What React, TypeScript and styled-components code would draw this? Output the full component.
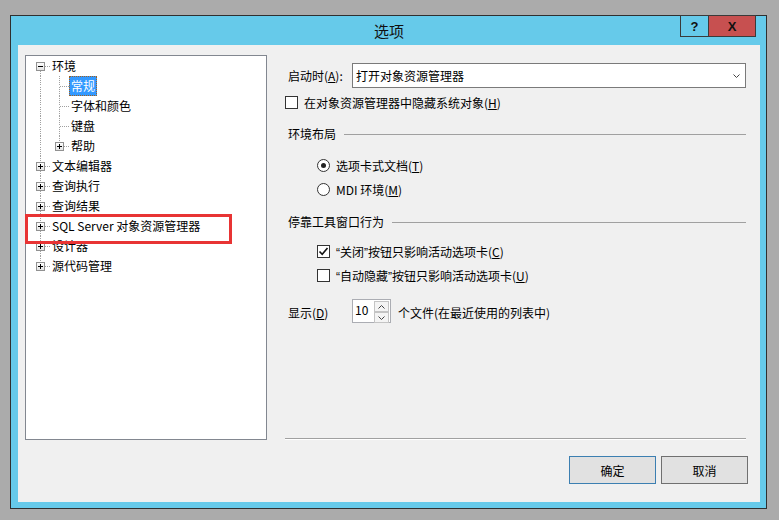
import * as React from 'react';
import styled, { createGlobalStyle } from 'styled-components';

const GlobalStyle = createGlobalStyle`
  body {
    margin: 0;
    padding: 15px 0 0 10px;
    background: #ababab;
    font-family: "Noto Sans CJK SC", "Noto Sans", sans-serif;
    font-size: 12px;
    color: #000;
  }
`;

const Window = styled.div`
  box-sizing: border-box;
  width: 757px;
  height: 494px;
  border: 1px solid #2f2f2f;
  background: #66caea;
  padding: 0 6px 6px 7px;
  display: flex;
  flex-direction: column;
`;

const TitleBar = styled.div`
  height: 29px;
  flex: none;
  display: grid;
  grid-template-columns: 1fr auto 1fr;
  align-items: center;
`;

const Title = styled.div`
  grid-column: 2;
  font-size: 15px;
  line-height: 29px;
  color: #111;
`;

const CaptionButtons = styled.div`
  grid-column: 3;
  justify-self: end;
  align-self: start;
  display: flex;
  margin-top: -1px;
  margin-right: 4px;
`;

interface CaptionButtonProps {
  $close?: boolean;
}

const CaptionButton = styled.div<CaptionButtonProps>`
  box-sizing: border-box;
  width: ${({ $close }) => ($close ? '48px' : '29px')};
  height: 22px;
  border: 1px solid #3a3a3a;
  margin-left: ${({ $close }) => ($close ? '-1px' : '0')};
  background: ${({ $close }) => ($close ? '#c75050' : '#66caea')};
  display: flex;
  align-items: center;
  justify-content: center;
  font-family: "Liberation Sans", sans-serif;
  font-weight: bold;
  font-size: 13px;
  color: #111;
`;

const Content = styled.div`
  flex: 1;
  background: #f0f0f0;
  padding: 10px 12px 18px 7px;
  display: flex;
  flex-direction: column;
`;

const Main = styled.div`
  height: 385px;
  display: grid;
  grid-template-columns: 242px 1fr;
  column-gap: 18px;
`;

const TreePanel = styled.div`
  position: relative;
  box-sizing: border-box;
  border: 1px solid #828790;
  background: #fff;
  padding-left: 5px;
`;

const TreeRow = styled.div`
  height: 20px;
  display: flex;
  align-items: center;
`;

interface NodeLabelProps {
  $selected?: boolean;
}

const NodeLabel = styled.span<NodeLabelProps>`
  box-sizing: border-box;
  height: 20px;
  line-height: 18px;
  padding: 0 1px;
  border: 1px dotted ${({ $selected }) => ($selected ? '#a0601f' : 'transparent')};
  background: ${({ $selected }) => ($selected ? '#3399ff' : 'transparent')};
  color: ${({ $selected }) => ($selected ? '#fff' : '#000')};
  white-space: nowrap;
`;

const Highlight = styled.div`
  position: absolute;
  left: -1px;
  top: 158px;
  width: 207px;
  height: 30px;
  box-sizing: border-box;
  border: 3px solid #e83434;
  pointer-events: none;
`;

const Options = styled.div`
  display: flex;
  flex-direction: column;
  margin-right: 2px;
`;

const FieldRow = styled.div`
  display: grid;
  grid-template-columns: 64px 1fr;
  align-items: center;
  padding-left: 3px;
  margin-top: 8px;
`;

const SelectBox = styled.div`
  box-sizing: border-box;
  height: 25px;
  border: 1px solid #7a7a7a;
  background: #fff;
  display: flex;
  align-items: center;
  justify-content: space-between;
  padding: 0 5px 0 3px;
`;

interface OptionRowProps {
  $indent?: number;
  $height?: number;
  $top?: number;
}

const OptionRow = styled.div<OptionRowProps>`
  height: ${({ $height }) => $height ?? 24}px;
  margin-top: ${({ $top }) => $top ?? 0}px;
  padding-left: ${({ $indent }) => $indent ?? 0}px;
  display: flex;
  align-items: center;
  gap: 6px;
`;

// curly quotes in a latin face so they stay narrow
const Quote = styled.span`
  font-family: "Liberation Sans", sans-serif;
`;

const CheckBox = styled.span`
  box-sizing: border-box;
  width: 13px;
  height: 13px;
  border: 1px solid #333;
  background: #fff;
  display: flex;
  align-items: center;
  justify-content: center;
`;

const Radio = styled.span`
  box-sizing: border-box;
  width: 13px;
  height: 13px;
  border: 1px solid #333;
  border-radius: 50%;
  background: #fff;
  display: flex;
  align-items: center;
  justify-content: center;
`;

const RadioDot = styled.span`
  width: 5px;
  height: 5px;
  border-radius: 50%;
  background: #222;
`;

interface GroupHeaderProps {
  $top: number;
}

const GroupHeader = styled.div<GroupHeaderProps>`
  height: 20px;
  margin-top: ${({ $top }) => $top}px;
  padding-left: 3px;
  display: flex;
  align-items: center;
  gap: 8px;

  &::after {
    content: '';
    flex: 1;
    border-top: 1px solid #a0a0a0;
    margin-top: 2px;
  }
`;

const Spinner = styled.div`
  box-sizing: border-box;
  width: 39px;
  height: 24px;
  border: 1px solid #abadb3;
  background: #fff;
  display: flex;
  align-items: flex-start;
  justify-content: space-between;
  padding: 1px 1px 0 2px;
`;

const SpinValue = styled.span`
  line-height: 18px;
`;

const SpinButtons = styled.div`
  display: flex;
  flex-direction: column;
`;

const SpinButton = styled.div`
  box-sizing: border-box;
  width: 15px;
  height: 11px;
  border: 1px solid #c4c4c4;
  background: #f4f4f4;
  display: flex;
  align-items: center;
  justify-content: center;
`;

const CountRow = styled.div`
  margin-top: 12px;
  height: 24px;
  display: grid;
  grid-template-columns: 64px auto 1fr;
  align-items: center;
  padding-left: 3px;
`;

const CountLabel = styled.span`
  padding-top: 3px;
`;

const CountSuffix = styled.span`
  margin-left: 7px;
  padding-top: 2px;
`;

const Separator = styled.div`
  margin-top: auto;
  border-top: 1px solid #a0a0a0;
  border-bottom: 1px solid #fff;
`;

const ButtonBar = styled.div`
  margin-top: 16px;
  display: flex;
  justify-content: flex-end;
  gap: 5px;
`;

interface DialogButtonProps {
  $default?: boolean;
}

const DialogButton = styled.div<DialogButtonProps>`
  box-sizing: border-box;
  width: 87px;
  height: 28px;
  border: 1px solid ${({ $default }) => ($default ? '#3c7fb1' : '#707070')};
  background: #e1e1e1;
  display: flex;
  align-items: center;
  justify-content: center;
`;

type Box = 'plus' | 'minus';

interface CellSpec {
  up?: boolean;
  down?: boolean;
  right?: boolean;
  box?: Box;
}

interface TreeNode {
  label: string;
  selected?: boolean;
  cells: CellSpec[];
}

const rootLine: CellSpec = { up: true, down: true };
const branch: CellSpec = { up: true, down: true, right: true };
const collapsed: CellSpec = { up: true, down: true, right: true, box: 'plus' };

const nodes: TreeNode[] = [
  { label: '环境', cells: [{ down: true, right: true, box: 'minus' }] },
  { label: '常规', selected: true, cells: [rootLine, branch] },
  { label: '字体和颜色', cells: [rootLine, branch] },
  { label: '键盘', cells: [rootLine, branch] },
  { label: '帮助', cells: [rootLine, { up: true, right: true, box: 'plus' }] },
  { label: '文本编辑器', cells: [collapsed] },
  { label: '查询执行', cells: [collapsed] },
  { label: '查询结果', cells: [collapsed] },
  { label: 'SQL Server 对象资源管理器', cells: [collapsed] },
  { label: '设计器', cells: [collapsed] },
  { label: '源代码管理', cells: [{ up: true, right: true, box: 'plus' }] },
];

const dot = { stroke: '#a0a0a0', strokeWidth: 1, strokeDasharray: '1 1' };

// one indent column of the tree: dotted connectors plus the expand box
function TreeCell({ up, down, right, box }: CellSpec) {
  return (
    <svg width="19" height="20" style={{ flex: 'none' }}>
      {up && <line x1="9.5" y1="0" x2="9.5" y2={box ? 6 : 10} {...dot} />}
      {down && <line x1="9.5" y1={box ? 15 : 11} x2="9.5" y2="20" {...dot} />}
      {right && <line x1={box ? 14 : 10} y1="10.5" x2="19" y2="10.5" {...dot} />}
      {box && (
        <>
          <defs>
            <linearGradient id="exp" x1="0" y1="0" x2="0" y2="1">
              <stop offset="0" stopColor="#ffffff" />
              <stop offset="1" stopColor="#e2e2e2" />
            </linearGradient>
          </defs>
          <rect x="5.5" y="6.5" width="8" height="8" fill="url(#exp)" stroke="#919191" />
          <line x1="7" y1="10.5" x2="12" y2="10.5" stroke="#000" />
          {box === 'plus' && <line x1="9.5" y1="8" x2="9.5" y2="13" stroke="#000" />}
        </>
      )}
    </svg>
  );
}

function Check() {
  return (
    <svg width="11" height="11" viewBox="0 0 11 11">
      <path d="M1.5 5.5 L4.2 8.3 L9.5 2" fill="none" stroke="#111" strokeWidth="1.6" />
    </svg>
  );
}

function Arrow({ down }: { down?: boolean }) {
  return (
    <svg width="7" height="4" viewBox="0 0 7 4">
      <path d={down ? 'M0.5 0.5 L3.5 3.5 L6.5 0.5' : 'M0.5 3.5 L3.5 0.5 L6.5 3.5'} fill="none" stroke="#444" />
    </svg>
  );
}

export default function App() {
  return (
    <>
      <GlobalStyle />
      <Window>
        <TitleBar>
          <Title>选项</Title>
          <CaptionButtons>
            <CaptionButton>?</CaptionButton>
            <CaptionButton $close>X</CaptionButton>
          </CaptionButtons>
        </TitleBar>
        <Content>
          <Main>
            <TreePanel>
              {nodes.map((node) => (
                <TreeRow key={node.label}>
                  {node.cells.map((cell, i) => (
                    <TreeCell key={i} {...cell} />
                  ))}
                  <NodeLabel $selected={node.selected}>{node.label}</NodeLabel>
                </TreeRow>
              ))}
              <Highlight />
            </TreePanel>
            <Options>
              <FieldRow>
                <span>
                  启动时(<u>A</u>):
                </span>
                <SelectBox>
                  <span>打开对象资源管理器</span>
                  <Arrow down />
                </SelectBox>
              </FieldRow>
              <OptionRow $height={20} $top={4}>
                <CheckBox />
                <span>
                  在对象资源管理器中隐藏系统对象(<u>H</u>)
                </span>
              </OptionRow>
              <GroupHeader $top={11}>环境布局</GroupHeader>
              <OptionRow $indent={32} $top={10}>
                <Radio>
                  <RadioDot />
                </Radio>
                <span>
                  选项卡式文档(<u>T</u>)
                </span>
              </OptionRow>
              <OptionRow $indent={32}>
                <Radio />
                <span>
                  MDI 环境(<u>M</u>)
                </span>
              </OptionRow>
              <GroupHeader $top={10}>停靠工具窗口行为</GroupHeader>
              <OptionRow $indent={32} $top={8}>
                <CheckBox>
                  <Check />
                </CheckBox>
                <span>
                  <Quote>“</Quote>关闭<Quote>”</Quote>按钮只影响活动选项卡(<u>C</u>)
                </span>
              </OptionRow>
              <OptionRow $indent={32}>
                <CheckBox />
                <span>
                  <Quote>“</Quote>自动隐藏<Quote>”</Quote>按钮只影响活动选项卡(<u>U</u>)
                </span>
              </OptionRow>
              <CountRow>
                <CountLabel>
                  显示(<u>D</u>)
                </CountLabel>
                <Spinner>
                  <SpinValue>10</SpinValue>
                  <SpinButtons>
                    <SpinButton>
                      <Arrow />
                    </SpinButton>
                    <SpinButton>
                      <Arrow down />
                    </SpinButton>
                  </SpinButtons>
                </Spinner>
                <CountSuffix>个文件(在最近使用的列表中)</CountSuffix>
              </CountRow>
              <Separator />
            </Options>
          </Main>
          <ButtonBar>
            <DialogButton $default>确定</DialogButton>
            <DialogButton>取消</DialogButton>
          </ButtonBar>
        </Content>
      </Window>
    </>
  );
}
